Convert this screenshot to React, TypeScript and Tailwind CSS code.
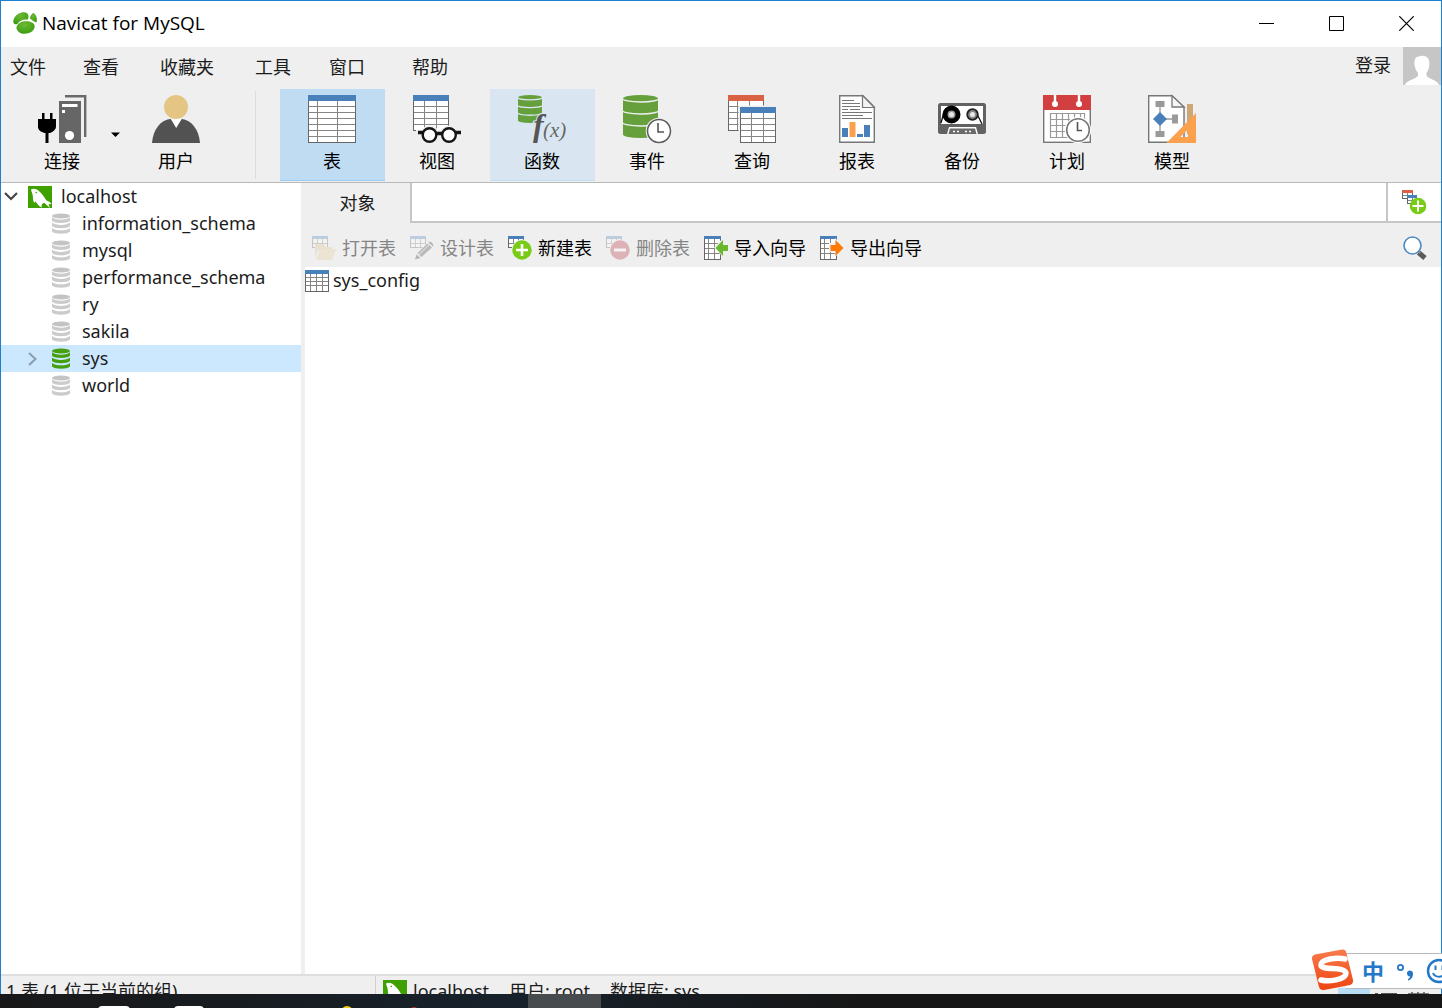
import React from "react";

type P = { className?: string };

function Table({ x, y, w, h, header, cols, row, head = 6 }: { x: number; y: number; w: number; h: number; header: string; cols: number[]; row: number; head?: number }) {
  const rows: number[] = [];
  for (let r = head + row; r < h - 2; r += row) rows.push(r);
  return (
    <g transform={`translate(${x} ${y})`} shapeRendering="crispEdges">
      <rect x={0} y={0} width={w} height={h} fill="#666" />
      <rect x={1} y={head} width={w - 2} height={h - head - 1} fill="#fff" />
      {rows.map((r) => (
        <rect key={r} x={1} y={r - 1} width={w - 2} height={1} fill="#858585" />
      ))}
      {cols.map((c) => (
        <rect key={c} x={c} y={head} width={1} height={h - head - 1} fill="#858585" />
      ))}
      <rect x={0} y={0} width={w} height={head} fill={header} />
    </g>
  );
}

function Cylinder({ w, h, layers, color, gap }: { w: number; h: number; layers: number; color: string; gap: string }) {
  const ry = w * 0.1;
  const step = (h - ry * 2) / layers;
  const seams = Array.from({ length: layers }, (_, i) => i);
  return (
    <g>
      <path d={`M0 ${ry} A${w / 2} ${ry} 0 0 1 ${w} ${ry} V${h - ry} A${w / 2} ${ry} 0 0 1 0 ${h - ry} Z`} fill={color} />
      {seams.map((i) => (
        <path key={i} d={`M-0.5 ${ry + i * step} A${w / 2 + 0.5} ${ry} 0 0 0 ${w + 0.5} ${ry + i * step}`} fill="none" stroke={gap} strokeWidth={1.3} />
      ))}
    </g>
  );
}

function Clock({ x, y, r }: { x: number; y: number; r: number }) {
  return (
    <g>
      <circle cx={x} cy={y} r={r + 1.8} fill="#efefef" />
      <circle cx={x} cy={y} r={r} fill="#fff" stroke="#5c5c5c" strokeWidth={1.5} />
      <path d={`M${x - 1} ${y - 8} V${y + 1} H${x + 5}`} fill="none" stroke="#555" strokeWidth={1.6} />
    </g>
  );
}

function Big({ children }: { children: React.ReactNode }) {
  return (
    <svg viewBox="0 0 48 48" className="size-12 shrink-0 overflow-visible" aria-hidden="true">
      {children}
    </svg>
  );
}

const ConnectIcon = () => (
  <Big>
    <path d="M27 1.200H47.200V42" fill="none" stroke="#6a6a6a" strokeWidth={2.4} />
    <rect x={21} y={6} width={22} height={42} fill="#666" />
    <rect x={24} y={9} width={15.500} height={3} fill="#fff" />
    <rect x={24} y={15} width={3} height={3} fill="#fff" />
    <circle cx={31.500} cy={40.500} r={4.600} fill="#fff" />
    <path d="M4 18h2.500v6h5.500v-6h2.500v6H18v7.500c0 3-3 5.500-6 6.500h-1.500v10h-3V38H6.500C3 37 0 35 0 32v-8h4z" fill="#000" />
  </Big>
);
const UserIcon = () => (
  <Big>
    <path d="M0 48C1 34 9 25 18 24H30C39 25 47 34 48 48Z" fill="#525252" />
    <path d="M18.500 23.500H30L24.200 33Z" fill="#fff" />
    <circle cx={24} cy={12} r={12} fill="#e5c584" />
  </Big>
);
const TableIcon = () => (
  <Big>
    <Table x={0} y={0} w={48} h={48} header="#4a80ba" cols={[9, 29]} row={6} />
  </Big>
);
const ViewIcon = () => (
  <Big>
    <Table x={0} y={0} w={36} h={36} header="#4a80ba" cols={[11, 23]} row={6} />
    <path d="M3 35H48V48H3Z" fill="#efefef" />
    <circle cx={16.500} cy={40} r={9.500} fill="#efefef" />
    <circle cx={36} cy={40} r={9.500} fill="#efefef" />
    <path d="M5 37.500H12M24 38.500H29M41 37.500H48" stroke="#151515" strokeWidth={3.600} />
    <circle cx={16.500} cy={40} r={6.800} fill="#fff" stroke="#151515" strokeWidth={2.400} />
    <circle cx={36} cy={40} r={6.800} fill="#fff" stroke="#151515" strokeWidth={2.400} />
  </Big>
);
const FunctionIcon = () => (
  <Big>
    <Cylinder w={24} h={28} layers={3} color="#65a03c" gap="#d9e6f1" />
    <text x={15} y={41} fontFamily="'Liberation Serif', serif" fontStyle="italic" fontWeight={700} fontSize={32} fill="#555" stroke="#d9e6f1" strokeWidth={2} paintOrder="stroke">f</text>
    <text x={25} y={42} fontFamily="'Liberation Serif', serif" fontStyle="italic" fontSize={21} fill="#666">(x)</text>
  </Big>
);
const EventIcon = () => (
  <Big>
    <Cylinder w={35} h={43} layers={3} color="#65a03c" gap="#efefef" />
    <Clock x={36} y={36} r={11.500} />
  </Big>
);
const QueryIcon = () => (
  <Big>
    <Table x={0} y={0} w={36} h={36} header="#d96245" cols={[9, 21]} row={6} />
    <rect x={10.500} y={10.500} width={38} height={38} fill="#efefef" />
    <Table x={12} y={12} w={36} h={36} header="#4a80ba" cols={[11, 23]} row={6} />
  </Big>
);
const ReportIcon = () => (
  <Big>
    <path d="M6.700 .7H30L41.300 12V47.300H6.700Z" fill="#fff" stroke="#777" strokeWidth={1.400} />
    <path d="M29.500 .7V12.500H41.300Z" fill="#f4f4f4" stroke="#777" strokeWidth={1.200} />
    <path d="M9 5.500H21M9 8.500H27M9 11.500H27M9 14.500H15M17 14.500H27M9 17.500H39M9 20.500H30M9 23.500H39" stroke="#777" strokeWidth={1} />
    <path d="M9 33h6v9H9zM24 39h6v3h-6zM31 30h6v12h-6z" fill="#4a80ba" />
    <path d="M16.500 27h6v15h-6z" fill="#fba04c" />
  </Big>
);
const BackupIcon = () => (
  <Big>
    <rect x={0} y={8} width={48} height={31} rx={2.500} fill="#626262" />
    <rect x={3} y={11} width={42} height={18} fill="#fff" />
    <path d="M9 39 11 32H38L40 39Z" fill="#fff" />
    <path d="M10.500 39 12 33.500H37L38.500 39Z" fill="#6b6b6b" />
    <path d="M15 36.500h2M19 36.500h2M27 36.500h2M31 36.500h2" stroke="#fff" strokeWidth={1.500} />
    <path d="M3 28 6 17M39 19 44 29" stroke="#111" strokeWidth={1.300} />
    <circle cx={13.500} cy={19.500} r={6.500} fill="#999" stroke="#000" strokeWidth={5} />
    <circle cx={13.500} cy={19.500} r={2.500} fill="#e8e8e8" />
    <circle cx={34.500} cy={19.500} r={5.300} fill="#888" stroke="#222" strokeWidth={1.800} />
    <circle cx={34.500} cy={19.500} r={2.500} fill="#e8e8e8" />
  </Big>
);
const ScheduleIcon = () => (
  <Big>
    <rect x={.7} y={.7} width={46.600} height={46.600} fill="#fff" stroke="#777" strokeWidth={1.400} />
    <rect x={0} y={0} width={48} height={15} fill="#d23f40" />
    <path d="M12 0V9M36 0V9" stroke="#fff" strokeWidth={2.400} />
    <circle cx={12} cy={9} r={3} fill="#fff" />
    <circle cx={36} cy={9} r={3} fill="#fff" />
    <path d="M7 18.500H42M7 24.500H42M7 30.500H42M7 36.500H42M7 42.500H42M7.500 18V43M13.500 18V43M19.500 18V43M25.500 18V43M31.500 18V43M37.500 18V43M41.500 18V43" stroke="#999" strokeWidth={1.200} />
    <circle cx={35} cy={35} r={13.200} fill="#fff" />
    <circle cx={35} cy={35} r={11.300} fill="#fff" stroke="#777" strokeWidth={1.600} />
    <path d="M34.500 27V35.500H39" fill="none" stroke="#555" strokeWidth={1.600} />
  </Big>
);
const ModelIcon = () => (
  <Big>
    <path d="M.7 .7H24L36 12V47.300H.7Z" fill="#fff" stroke="#777" strokeWidth={1.400} />
    <path d="M24 .7V12H36Z" fill="#f6f6f6" stroke="#777" strokeWidth={1.300} />
    <path d="M12 9V39M12 24H27" stroke="#999" strokeWidth={1.300} />
    <path d="M7.500 6h9v6h-9zM7.500 36h9v6h-9zM24 19.500h6v9h-6z" fill="#9a9a9a" />
    <path d="M12 17 19 24 12 31 5 24Z" fill="#4a80ba" />
    <path d="M39 9h6v30h-6z" fill="#cfa776" />
    <path d="M48 18V48H18.500ZM40 34.500 32.500 42H40Z" fill="#fba04c" fillRule="evenodd" />
  </Big>
);

const NavicatLogo = () => (
  <svg viewBox="0 0 24 22" className="h-[22px] w-6" aria-hidden="true">
    <defs>
      <radialGradient id="leaf" cx=".45" cy=".3" r=".75">
        <stop offset="0" stopColor="#6dba35" />
        <stop offset="1" stopColor="#379a0c" />
      </radialGradient>
    </defs>
    <path d="M.3 10C0 6 4 1 9 .4 13 0 15.500 1.500 15.500 4.500L15 7.500C10 7 6.500 8.500 4.500 12 2.500 12.800 .5 12 .3 10Z" fill="url(#leaf)" />
    <path d="M17 6.500C17 4 19 1.200 20.500 1 23.500 3 24.700 7 23.300 10.500 21 9.500 18.500 8 17 6.500Z" fill="url(#leaf)" />
    <path d="M3.500 15C5 10 11 8.300 17 9.700 22.500 11 23 15 19.500 19 16 22.300 9 22.500 6.500 20.500 4.500 19 3 17 3.500 15Z" fill="url(#leaf)" />
  </svg>
);

const ServerIcon = () => (
  <svg viewBox="0 0 24 22" className="h-[22px] w-6 shrink-0" aria-hidden="true">
    <rect width={24} height={22} fill="#3fa002" />
    <path d="M3 3.500C6 1.800 10 3.500 13 7 16 10 17 12.500 18.500 14.500 21 15.300 22.500 16.500 23.500 18L20.500 18.300 22 22 16.500 17C14.500 16.500 13.500 18.500 13.500 21.500 11 20.500 9.500 17.500 7.500 15.500 7 17 6 17 5.500 15 4.500 12 5.500 9.500 3.500 5.500Z" fill="#fff" />
    <circle cx={8.300} cy={6.500} r={.8} fill="#3fa002" />
  </svg>
);

const DbIcon = ({ active }: { active?: boolean }) => (
  <svg viewBox="0 0 18 22" className="h-[22px] w-[18px] shrink-0" aria-hidden="true">
    <ellipse cx={9} cy={3} rx={9} ry={2.600} fill={active ? "#45a010" : "#c4c4c4"} />
    {[3.500, 8.800, 14.100].map((y) => (
      <path key={y} d={`M0 ${y + .8}C3 ${y + 4} 15 ${y + 4} 18 ${y + .8}V${y + 4.300}C15 ${y + 7.300} 3 ${y + 7.300} 0 ${y + 4.300}Z`} fill={active ? "#45a010" : "#cbcbcb"} />
    ))}
  </svg>
);

function Mini({ children, dim }: { children: React.ReactNode; dim?: boolean }) {
  return (
    <svg viewBox="0 0 24 24" className={dim ? "size-6 shrink-0 opacity-30" : "size-6 shrink-0"} aria-hidden="true">
      {children}
    </svg>
  );
}
const MiniTable = () => <Table x={0} y={0} w={16} h={12} header="#4a80ba" cols={[5, 10]} row={5} head={3} />;

const OpenIcon = () => (
  <Mini dim>
    <MiniTable />
    <path d="M3 8H12L14 11H20V14H6L3 22Z" fill="#d9c48c" />
    <path d="M8 13H24L20 24H4Z" fill="#e2cd96" />
  </Mini>
);
const DesignIcon = () => (
  <Mini dim>
    <MiniTable />
    <path d="M5 24 6.500 17.500 18 6 24 11.500 11.500 22.500Z" fill="#efefef" />
    <path d="M5 23.500 6.500 18.500 10.500 22Z" fill="#333" />
    <path d="M7.500 17 17.500 7.500 22 11.500 11.500 21Z" fill="#444" />
    <path d="M9 18.500 19 9" stroke="#ddd" strokeWidth={1} />
    <path d="M18.500 6.500C20 4 24.500 8 23 10.500Z" fill="#333" />
  </Mini>
);
const NewIcon = () => (
  <Mini>
    <MiniTable />
    <circle cx={14} cy={14} r={10.500} fill="#efefef" />
    <circle cx={14} cy={14} r={9.700} fill="#78cc16" />
    <path d="M14 8V20M8 14H20" stroke="#fff" strokeWidth={2.600} />
  </Mini>
);
const DeleteIcon = () => (
  <Mini dim>
    <MiniTable />
    <circle cx={14} cy={14} r={10.500} fill="#efefef" />
    <circle cx={14} cy={14} r={9.700} fill="#b5283a" />
    <path d="M8 14H20" stroke="#fff" strokeWidth={3} />
  </Mini>
);
const ImportIcon = () => (
  <Mini>
    <Table x={0} y={0} w={17} h={24} header="#4a80ba" cols={[4, 10]} row={5} head={3} />
    <path d="M10 11.500 19 2V8H25V15H19V21Z" fill="#efefef" />
    <path d="M11.500 12 19 4V9H24V15H19V20Z" fill="#6ab82b" />
  </Mini>
);
const ExportIcon = () => (
  <Mini>
    <Table x={0} y={0} w={17} h={24} header="#4a80ba" cols={[4, 10]} row={5} head={3} />
    <path d="M9 7H15V2L25 11.500 15 21V16H9Z" fill="#efefef" />
    <path d="M10.500 9H15.500V4L23.500 12 15.500 20V15H10.500Z" fill="#ff7906" />
  </Mini>
);

const menus = ["文件", "查看", "收藏夹", "工具", "窗口", "帮助"];

const tools = [
  { label: "表", icon: <TableIcon />, look: "bg-[#c0dcf3] border-[#99cef5]" },
  { label: "视图", icon: <ViewIcon />, look: "border-transparent" },
  { label: "函数", icon: <FunctionIcon />, look: "bg-[#d9e6f1] border-[#c3dff4]" },
  { label: "事件", icon: <EventIcon />, look: "border-transparent" },
  { label: "查询", icon: <QueryIcon />, look: "border-transparent" },
  { label: "报表", icon: <ReportIcon />, look: "border-transparent" },
  { label: "备份", icon: <BackupIcon />, look: "border-transparent" },
  { label: "计划", icon: <ScheduleIcon />, look: "border-transparent" },
  { label: "模型", icon: <ModelIcon />, look: "border-transparent" },
];

const actions = [
  { label: "打开表", icon: <OpenIcon />, disabled: true },
  { label: "设计表", icon: <DesignIcon />, disabled: true },
  { label: "新建表", icon: <NewIcon />, disabled: false },
  { label: "删除表", icon: <DeleteIcon />, disabled: true },
  { label: "导入向导", icon: <ImportIcon />, disabled: false },
  { label: "导出向导", icon: <ExportIcon />, disabled: false },
];

const databases = ["information_schema", "mysql", "performance_schema", "ry", "sakila", "sys", "world"];

function ToolButton({ label, icon, className = "" }: P & { label: string; icon: React.ReactNode }) {
  return (
    <button className={`flex shrink-0 flex-col items-center border-b pt-[6px] text-black ${className}`}>
      {icon}
      <span className="mt-1 leading-7">{label}</span>
    </button>
  );
}

function TitleBar() {
  return (
    <header className="flex h-[46px] shrink-0 items-center justify-between bg-white pb-[2px]">
      <div className="flex items-center gap-[5px] pl-3">
        <NavicatLogo />
        <h1 className="font-['Open_Sans','Noto_Sans',sans-serif] text-[19px] leading-7 text-black">Navicat for MySQL</h1>
      </div>
      <div className="flex h-full text-black">
        <button aria-label="最小化" className="flex w-[70px] items-center justify-center">
          <svg viewBox="0 0 15 15" className="size-[15px]"><path d="M0 7.500H15" stroke="currentColor" /></svg>
        </button>
        <button aria-label="最大化" className="flex w-[70px] items-center justify-center">
          <svg viewBox="0 0 15 15" className="size-[15px]"><path d="M.5 .5H14.500V14.500H.5Z" fill="none" stroke="currentColor" /></svg>
        </button>
        <button aria-label="关闭" className="flex w-[70px] items-center justify-center">
          <svg viewBox="0 0 15 15" className="size-[15px]"><path d="M.3 .3 14.700 14.700M14.700 .3 .3 14.700" stroke="currentColor" strokeWidth={1.200} /></svg>
        </button>
      </div>
    </header>
  );
}

function Ime() {
  return (
    <div className="absolute right-0 bottom-[19px] z-10 flex h-9 w-24 items-center border-y border-[#b9b9c0] bg-white text-[#2478c8]">
      <svg viewBox="0 0 44 44" className="absolute -top-[6px] -left-[35px] size-11" aria-hidden="true">
        <defs>
          <linearGradient id="ime" x1="0" y1="0" x2="0" y2="1">
            <stop offset="0" stopColor="#f87b4c" />
            <stop offset="1" stopColor="#ee4410" />
          </linearGradient>
        </defs>
        <path d="M4 6.500 31 1.500Q34.500 1 35.300 4.500L42 32Q42.500 36 39 37L13 42Q9 42.500 8 39L1 11Q.5 7.500 4 6.500Z" fill="url(#ime)" />
        <path d="M34 11C26 9 10 11 10 17 10 23 34 18 35 25 35 32 17 34 10 32" fill="none" stroke="#fff" strokeWidth={5.500} strokeLinecap="round" />
      </svg>
      <span className="ml-4 text-[22px] leading-8 font-bold">中</span>
      <svg viewBox="0 0 20 20" className="ml-3 size-5 shrink-0" aria-hidden="true">
        <circle cx={4.500} cy={6.500} r={2.600} fill="none" stroke="currentColor" strokeWidth={1.800} />
        <path d="M11 12C11 8.500 17 8.500 17 12.500 17 16.500 15 19 12 19.500V18C13.500 17.500 14 16.500 14 15.500 12 15.500 11 14 11 12Z" fill="currentColor" />
      </svg>
      <svg viewBox="0 0 26 26" className="absolute -right-[10px] size-[26px]" aria-hidden="true">
        <circle cx={13} cy={13} r={11} fill="none" stroke="currentColor" strokeWidth={2.500} />
        <path d="M9.500 7.500V12M16.500 7.500V12M7 15C9 20 17 20 19 15" fill="none" stroke="currentColor" strokeWidth={2} />
      </svg>
    </div>
  );
}

export default function App() {
  return (
    <div className="relative flex h-screen flex-col overflow-hidden bg-[#efefef] font-['Noto_Sans','Noto_Sans_CJK_SC',sans-serif] text-[18px] text-[#1c1c1c]">
      <div className="flex min-h-0 flex-1 flex-col border-x border-t border-[#1a80d0]">
        <TitleBar />

        <div className="flex h-[41px] shrink-0 items-center justify-between">
          <nav className="grid grid-cols-[73px_77px_95px_74px_83px_auto] pb-[2px] pl-[9px]">
            {menus.map((m) => (
              <button key={m} className="text-left leading-7">{m}</button>
            ))}
          </nav>
          <div className="flex items-start gap-3 self-start">
            <button className="pt-1 leading-7">登录</button>
            <svg viewBox="0 0 38 38" className="size-[38px]" role="img" aria-label="头像">
              <rect width={38} height={38} fill="#c6c6c6" />
              <path d="M2 38C3 33 14 32 15 28.500V26C12.500 23 12 20 11.500 18 11 12 13 9 16 9.500 19 8 24 8 26 13 27 17 26 23 23.500 26V28.500C25 32 35 33 36 38Z" fill="#fff" />
            </svg>
          </div>
        </div>

        <div className="flex h-[95px] shrink-0 items-stretch border-b border-[#b8b8b8] pt-px pb-px pl-[13px]">
          <ToolButton label="连接" icon={<ConnectIcon />} className="w-24 border-transparent" />
          <button aria-label="连接选项" className="flex w-3 items-center justify-center">
            <svg viewBox="0 0 10 6" className="h-[6px] w-[10px]"><path d="M0 .5H9L4.500 5Z" fill="#000" /></svg>
          </button>
          <ToolButton label="用户" icon={<UserIcon />} className="w-27 border-transparent" />
          <div className="my-[2px] mr-6 ml-[25px] w-px bg-[#dcdcdc]" />
          {tools.map((t) => (
            <ToolButton key={t.label} label={t.label} icon={t.icon} className={`w-[105px] pr-px ${t.look}`} />
          ))}
        </div>

        <div className="flex min-h-0 flex-1">
          <aside className="w-[300px] shrink-0 bg-white">
            <div className="flex h-[27px] items-center">
              <button aria-label="折叠 localhost" className="flex w-[27px] pl-[3px]">
                <svg viewBox="0 0 14 9" className="h-[9px] w-[14px]"><path d="M1 1 7 7 13 1" fill="none" stroke="#444" strokeWidth={2.200} /></svg>
              </button>
              <ServerIcon />
              <span className="ml-[9px]">localhost</span>
            </div>
            <ul>
              {databases.map((d) => (
                <li key={d} className={d === "sys" ? "flex h-[27px] items-center bg-[#cce8ff] pl-[27px]" : "flex h-[27px] items-center pl-[27px]"}>
                  <span className="flex w-6">
                    {d === "sys" && (
                      <svg viewBox="0 0 9 14" className="h-[14px] w-[9px]"><path d="M1 1 7.500 7 1 13" fill="none" stroke="#8b9cab" strokeWidth={2} /></svg>
                    )}
                  </span>
                  <DbIcon active={d === "sys"} />
                  <span className="ml-3">{d}</span>
                </li>
              ))}
            </ul>
          </aside>
          <div className="w-1 shrink-0" />
          <main className="flex min-w-0 flex-1 flex-col">
            <div className="flex h-10 shrink-0">
              <button className="w-[105px] shrink-0">对象</button>
              <div className="flex-1 border-b-2 border-l-2 border-[#c6c6c6] bg-white" />
              <button aria-label="新建查询" className="flex w-[55px] items-center justify-center border-b-2 border-l-2 border-[#c6c6c6] bg-white pr-[2px]">
                <svg viewBox="0 0 24 24" className="size-6">
                  <Table x={0} y={0} w={11} h={9} header="#d96245" cols={[5]} row={3} head={3} />
                  <Table x={5} y={5} w={10} h={9} header="#4a80ba" cols={[5]} row={3} head={3} />
                  <circle cx={16} cy={16} r={8.300} fill="#78cc16" />
                  <path d="M16 10.500V21.500M10.500 16H21.500" stroke="#fff" strokeWidth={2} />
                </svg>
              </button>
            </div>
            <div className="flex h-11 shrink-0 items-center pt-[6px] pr-[14px] pl-[7px]">
              <div className="flex flex-1 gap-[14px]">
                {actions.map((a) => (
                  <button key={a.label} disabled={a.disabled} className="flex items-center gap-[6px] leading-7 text-black disabled:text-[#858585]">
                    {a.icon}
                    {a.label}
                  </button>
                ))}
              </div>
              <button aria-label="搜索">
                <svg viewBox="0 0 24 24" className="size-6">
                  <path d="M15.500 16.500 22 22" stroke="#5a5a5a" strokeWidth={5} />
                  <path d="M14 14 17 17" stroke="#999" strokeWidth={2} />
                  <circle cx={9.500} cy={9.500} r={8.500} fill="#fff" stroke="#4f89c4" strokeWidth={1.600} />
                </svg>
              </button>
            </div>
            <div className="flex-1 bg-white">
              <button className="flex h-[27px] items-center gap-1">
                <svg viewBox="0 0 24 22" className="h-[22px] w-6">
                  <Table x={0} y={0} w={24} h={22} header="#4a80ba" cols={[5, 11, 17]} row={4} head={4} />
                </svg>
                sys_config
              </button>
            </div>
          </main>
        </div>

        <footer className="flex h-5 shrink-0 items-start overflow-hidden border-t-2 border-[#dedede]">
          <span className="w-[375px] shrink-0 border-r border-[#d0d0d0] pt-px pl-[5px] leading-7">1 表 (1 位于当前的组)</span>
          <span className="flex items-start gap-[6px] pl-[7px]">
            <span className="pt-1"><ServerIcon /></span>
            <span className="pt-px leading-7">localhost</span>
          </span>
          <span className="ml-5 pt-px leading-7">用户: root</span>
          <span className="ml-5 flex-1 pt-px leading-7">数据库: sys</span>
          <div className="flex gap-1 pt-3 pr-[7px]">
            <button aria-label="图标" className="h-7 w-8 bg-[#b9dcf5] px-1 pt-px">
              <svg viewBox="0 0 24 20" className="h-5 w-6"><path d="M1 2H23M1 6H23M1 10H23" stroke="#444" strokeWidth={2} strokeDasharray="4 2" /></svg>
            </button>
            <button aria-label="列表" className="h-7 w-7">
              <svg viewBox="0 0 24 20" className="h-5 w-6"><path d="M1 2H4M7 2H23M1 8H4M7 8H23" stroke="#555" strokeWidth={2} /></svg>
            </button>
            <button aria-label="ER 图表" className="h-7 w-7">
              <svg viewBox="0 0 24 20" className="h-5 w-6"><path d="M2 2H23M2 6H23M6 0V12M12 0V12M18 0V12" stroke="#555" strokeWidth={1.500} /></svg>
            </button>
          </div>
        </footer>
      </div>

      <div className="flex h-[14px] shrink-0 items-start overflow-hidden bg-linear-to-r from-[#181818] via-[#17212b] via-35% to-[#161616] to-60%">
        <div className="mt-3 ml-[98px] h-3 w-8 shrink-0 rounded-t bg-white" />
        <div className="mt-3 ml-11 h-3 w-[30px] shrink-0 rounded-t bg-white" />
        <div className="mt-3 ml-[137px] h-3 w-3 shrink-0 rounded-full bg-[#f2cf16]" />
        <div className="mt-[13px] ml-[57px] h-2 w-2 shrink-0 rounded-full bg-[#a33]" />
        <div className="ml-[110px] h-full w-[73px] shrink-0 bg-[#484b4d]" />
      </div>

      <Ime />
    </div>
  );
}
